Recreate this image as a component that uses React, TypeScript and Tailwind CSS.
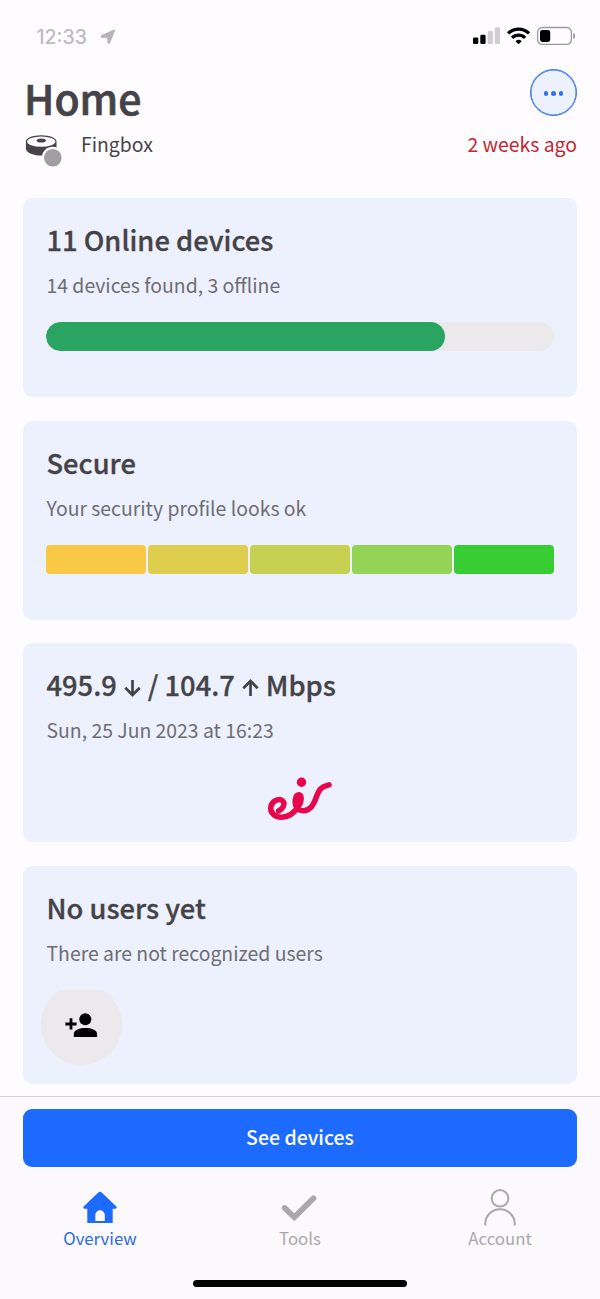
import type { ReactNode } from "react";

function StatusBar() {
  return (
    <div className="flex h-[60px] items-start justify-between pr-[24px] pl-[36.500px]">
      <div className="flex items-center pt-[25px]">
        <span className="w-[63.500px] font-['Inter'] text-[19.500px] leading-[24px] font-medium whitespace-nowrap text-[#bebabd]">
          12:33
        </span>
        <svg
          className="mt-[-1px] h-[16px] w-[16px]"
          viewBox="0 0 16 16"
          fill="#b8b4b7"
          stroke="#b8b4b7"
          strokeWidth="1.400"
          strokeLinejoin="round"
        >
          <path d="M14.400 1.200L9.300 14H8.200L7.700 8.200L1.500 8V6.800z" />
        </svg>
      </div>
      <svg className="mt-[26px] h-[20px] w-[104px]" viewBox="472 26 104 20">
        <rect x="473" y="37.500" width="5.300" height="6.500" rx="1.300" />
        <rect x="480.300" y="34.700" width="5.300" height="9.300" rx="1.300" />
        <rect x="487.600" y="31" width="5.300" height="13" rx="1.300" fill="#cfcdd0" />
        <rect x="494.800" y="27.300" width="5.300" height="16.700" rx="1.300" fill="#cfcdd0" />
        <g fill="none" stroke="#000" strokeWidth="3.300">
          <path d="M508.100 33.400a14.800 14.800 0 0 1 21 0" />
          <path d="M512.100 37.800a9.100 9.100 0 0 1 13 0" />
        </g>
        <path d="M518.600 44.300l-3.100-3.100a4.600 4.600 0 0 1 6.200 0z" />
        <rect x="537.600" y="27.500" width="33.800" height="16.900" rx="4.800" fill="none" stroke="#9b999c" strokeWidth="1.300" />
        <rect x="540" y="29.900" width="10.200" height="12" rx="2.300" />
        <path d="M573.200 33v6c1.300-.4 2-1.600 2-3s-.7-2.600-2-3z" fill="#9b999c" />
      </svg>
    </div>
  );
}

function FingboxIcon() {
  return (
    <svg className="h-[34px] w-[38px]" viewBox="25 134 38 34">
      <path
        d="M25.900 141.500c0-3.300 6.700-6.200 15.300-6.200s15.300 2.900 15.300 6.200v7.200c0 3.700-6.700 6.800-15.300 6.800s-15.300-3.100-15.300-6.800z"
        fill="#444347"
      />
      <ellipse cx="41.200" cy="141.600" rx="14.200" ry="5.200" fill="#fefcff" />
      <ellipse cx="41.300" cy="140.600" rx="4.600" ry="2" fill="#444347" />
      <circle cx="52.800" cy="157.800" r="11" fill="#fefcff" />
      <circle cx="52.800" cy="157.800" r="8.800" fill="#a09ea1" />
    </svg>
  );
}

function Card({
  title,
  subtitle,
  tall,
  children,
}: {
  title: ReactNode;
  subtitle: string;
  tall?: boolean;
  children: ReactNode;
}) {
  return (
    <section className={`${tall ? "h-[218px]" : "h-[199px]"} shrink-0 rounded-[9px] bg-[#edf1fe] px-[23px] pt-6`}>
      <h2 className="flex h-[34px] items-center pl-[0.500px] text-[27.300px] leading-[34px] font-medium whitespace-pre text-[#444347] [-webkit-text-stroke:0.300px]">
        {title}
      </h2>
      <p className="mt-[15px] pl-[0.500px] text-[19.400px] leading-[28px] whitespace-nowrap text-[#6e6d73]">
        {subtitle}
      </p>
      <div className="mt-[23px]">{children}</div>
    </section>
  );
}

function Arrow({ up }: { up?: boolean }) {
  return (
    <svg
      className={`mx-[0.800px] mt-[7px] h-[18px] w-[17px] ${up ? "" : "rotate-180"}`}
      viewBox="0 0 17 18"
      fill="none"
      stroke="#444347"
      strokeWidth="2.700"
    >
      <path d="M8.500 17V2M1.300 9.200 8.500 2l7.200 7.200" />
    </svg>
  );
}

function EirLogo() {
  return (
    <svg className="h-[44px] w-[66px]" viewBox="267 777 66 44" fill="none" stroke="#e8054b" strokeLinecap="round">
      <path
        strokeWidth="5.500"
        d="M278.500 811C283.500 808.500 285 804 283 801.200C280.300 797.800 272.600 800 271 806C269.500 812.700 275 817.500 282 817.200C289.500 816.900 295.500 811.200 299 805.500C302.500 799.500 301.300 794.500 298.800 794.800C295 795.200 294 803 296.800 807.500C299.500 811.500 306.500 811.800 310.500 807.800C316.500 802 315.500 794 321 788.500C323.500 786 326.500 785.500 329 784.800"
      />
      <path strokeWidth="3" d="M297.500 800.500v5" />
      <circle cx="301.500" cy="782.300" r="4.700" fill="#e8054b" stroke="none" />
    </svg>
  );
}

function Tab({ label, active, children }: { label: string; active?: boolean; children: ReactNode }) {
  return (
    <div className="flex flex-1 flex-col items-center">
      <div className="flex h-[40px] w-[40px] items-center justify-center">{children}</div>
      <span
        className={`mt-[-1px] text-[16.800px] leading-[24px] whitespace-nowrap ${active ? "text-[#2b6be6]" : "text-[#aaa8ab]"}`}
      >
        {label}
      </span>
    </div>
  );
}

export default function App() {
  return (
    <div className="flex h-[1299px] w-[600px] flex-col overflow-hidden bg-[#fefcff] font-['Noto_Sans_CJK_SC',sans-serif]">
      <StatusBar />

      <header className="flex h-[138px] shrink-0 justify-between pr-[23px] pl-[24px]">
        <div>
          <h1 className="mt-[12px] text-[41px] leading-[50px] font-medium text-[#444347] [-webkit-text-stroke:0.700px]">
            Home
          </h1>
          <div className="mt-[8px] flex items-start">
            <div className="mt-[4px] w-[57px] pl-px">
              <FingboxIcon />
            </div>
            <span className="text-[19.400px] leading-[28px] text-[#444347]">Fingbox</span>
          </div>
        </div>
        <div className="flex flex-col items-end">
          <button className="mt-[9px] flex h-[47px] w-[47px] items-center justify-center gap-[3.500px] rounded-full border border-[#2f71ee] bg-[#edf1fe] pt-[2px] shadow-[inset_0_0_0_0.500px_#2f71ee]">
            <span className="h-[4.200px] w-[4.200px] rounded-full bg-[#2f71ee]" />
            <span className="h-[4.200px] w-[4.200px] rounded-full bg-[#2f71ee]" />
            <span className="h-[4.200px] w-[4.200px] rounded-full bg-[#2f71ee]" />
          </button>
          <span className="mt-[14px] text-[19.400px] leading-[28px] text-[#c3262f]">2 weeks ago</span>
        </div>
      </header>

      <main className="flex h-[898px] shrink-0 flex-col gap-[23.500px] px-[23px]">
        <Card title="11 Online devices" subtitle="14 devices found, 3 offline">
          <div className="h-[29px] overflow-hidden rounded-[15px] bg-[#ebe9ec]">
            <div className="h-full w-[399px] rounded-[15px] bg-[#2aa561]" />
          </div>
        </Card>

        <Card title="Secure" subtitle="Your security profile looks ok">
          <div className="grid h-[29px] grid-cols-5 gap-[2.500px]">
            <div className="rounded-[4px] bg-[#f8c846]" />
            <div className="rounded-[4px] bg-[#dece4d]" />
            <div className="rounded-[4px] bg-[#c6d152]" />
            <div className="rounded-[4px] bg-[#93d355]" />
            <div className="rounded-[4px] bg-[#38ce33]" />
          </div>
        </Card>

        <Card
          title={
            <>
              <span>495.9 </span>
              <Arrow />
              <span> / 104.7 </span>
              <Arrow up />
              <span> Mbps</span>
            </>
          }
          subtitle="Sun, 25 Jun 2023 at 16:23"
        >
          <div className="flex justify-center pt-[10px]">
            <EirLogo />
          </div>
        </Card>

        <Card tall title="No users yet" subtitle="There are not recognized users">
          <div className="-ml-[5px] h-[75px] overflow-hidden">
            <div className="-mt-[6px] h-[81px] w-[81px] rounded-full bg-[#ebe9ec] pt-[28px] pl-[23px]">
              <svg className="h-[26px] w-[34px]" viewBox="64 1011 34 26">
                <circle cx="85.300" cy="1018.300" r="6" />
                <path d="M73.800 1036v-3.200c0-3.800 6-5.800 11.600-5.800s11.700 2 11.700 5.800v3.200z" />
                <path d="M65.400 1023h11.200M71 1017.300v11.200" stroke="#000" strokeWidth="2.800" />
              </svg>
            </div>
          </div>
        </Card>
      </main>

      <footer className="flex flex-1 flex-col border-t-[1.500px] border-[#d4d2d5] bg-[#fbf9fc]">
        <div className="px-[23px] pt-[12px]">
          <button className="h-[58px] w-full rounded-[9px] bg-[#1c6aff] pb-[3px] text-[19.500px] leading-[28px] font-medium text-white">
            See devices
          </button>
        </div>
        <nav className="mt-[20px] flex">
          <Tab label="Overview" active>
            <svg className="h-[40px] w-[40px]" viewBox="80 1187 40 40">
              <path
                d="M98.300 1192.500q1.700-1.300 3.400 0l15.200 14.500-1 1.700h-3.200v14.300h-25.400v-14.300h-3.200l-1-1.700zM95.300 1221h9.500v-6a4.750 4.750 0 0 0-9.500 0z"
                fill="#1c6aff"
                fillRule="evenodd"
              />
            </svg>
          </Tab>
          <Tab label="Tools">
            <svg className="h-[40px] w-[40px]" viewBox="280 1187 40 40">
              <path
                d="M284.700 1208l9.600 9.300 19.200-19"
                fill="none"
                stroke="#aaa8ab"
                strokeWidth="5.800"
                strokeLinecap="round"
              />
            </svg>
          </Tab>
          <Tab label="Account">
            <svg
              className="h-[40px] w-[40px]"
              viewBox="480 1187 40 40"
              fill="none"
              stroke="#aaa8ab"
              strokeWidth="2"
            >
              <circle cx="500" cy="1198.300" r="8.300" />
              <path d="M485.300 1225.500v-2a14.700 14.200 0 0 1 29.400 0v2" />
            </svg>
          </Tab>
        </nav>
        <div className="mx-auto mt-[30px] h-[7px] w-[214px] rounded-full bg-black" />
      </footer>
    </div>
  );
}
